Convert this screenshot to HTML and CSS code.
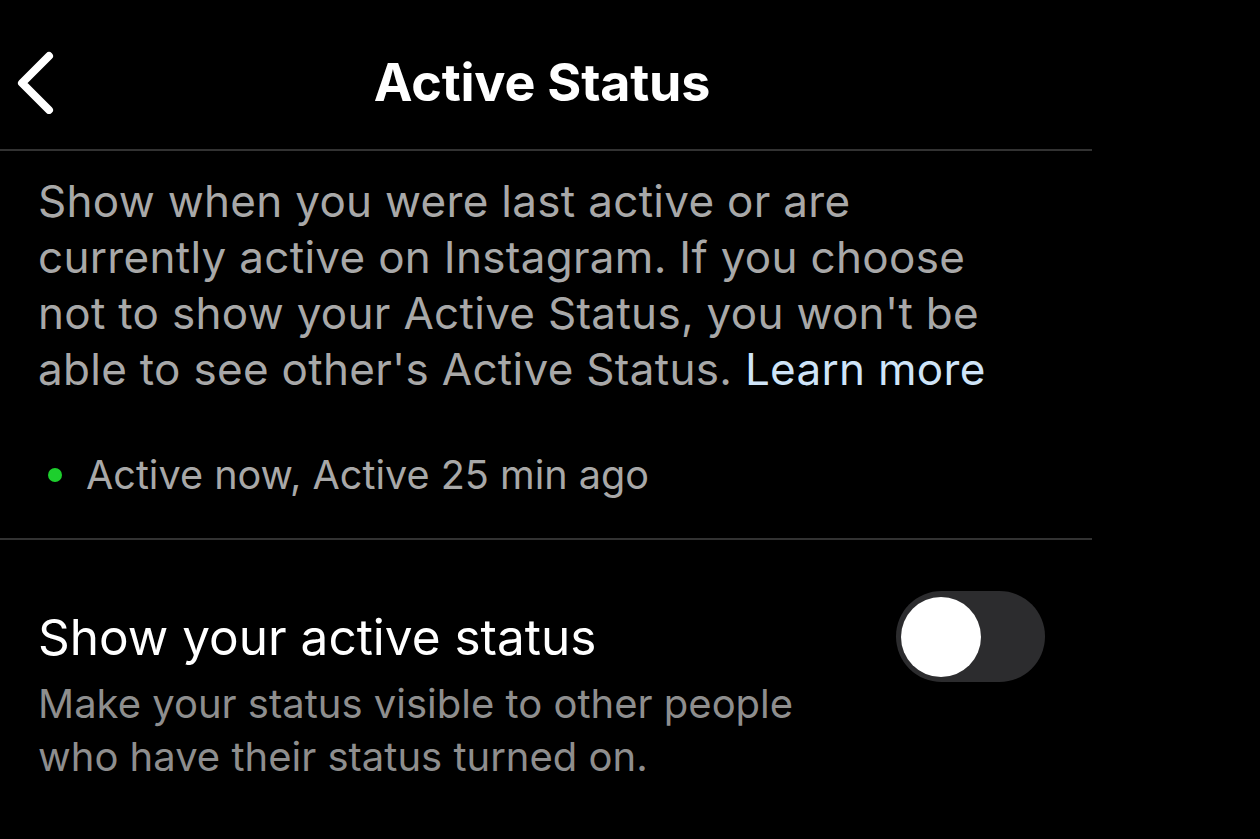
FILE: index.html
```html
<!DOCTYPE html>
<html>
<head>
<meta charset="utf-8">
<link rel="stylesheet" href="styles.css">
</head>
<body>
<div class="screen">
  <header class="nav">
    <svg class="back" width="40" height="64" viewBox="0 0 40 64">
      <path d="M34 6 L7 33 L34 60" fill="none" stroke="#fff" stroke-width="8" stroke-linecap="round" stroke-linejoin="round"/>
    </svg>
    <h1 class="title">Active Status</h1>
  </header>
  <section class="info">
    <p class="desc">Show when you were last active or are currently active on Instagram. If you choose not to show your Active Status, you won't be able to see other's Active Status. <span class="link">Learn more</span></p>
    <div class="example"><span class="dot"></span><span>Active now, Active 25 min ago</span></div>
  </section>
  <section class="setting">
    <div class="setting-text">
      <div class="setting-title">Show your active status</div>
      <div class="setting-sub">Make your status visible to other people who have their status turned on.</div>
    </div>
    <div class="toggle"><span class="knob"></span></div>
  </section>
</div>
</body>
</html>
```
FILE: styles.css
```css
html, body {
  margin: 0;
  padding: 0;
  background: #000;
}
body {
  width: 1260px;
  height: 839px;
  overflow: hidden;
  font-family: Inter, "Noto Sans", sans-serif;
}
.screen {
  width: 1092px;
}
.nav {
  position: relative;
  height: 149px;
  border-bottom: 2px solid #323232;
  display: flex;
  align-items: center;
  justify-content: center;
}
.back {
  position: absolute;
  left: 15px;
  top: 50px;
}
.title {
  margin: 0;
  color: #fff;
  font-size: 52px;
  line-height: 60px;
  font-weight: 700;
  position: relative;
  top: 8px;
  left: -4px;
  letter-spacing: -0.2px;
}
.info {
  padding: 22px 0 39px 38px;
  border-bottom: 2px solid #323232;
}
.desc {
  margin: 0;
  color: #a8a8a8;
  font-size: 44px;
  line-height: 56px;
  letter-spacing: 0.3px;
  width: 980px;
}
.link {
  color: #cfe4f8;
}
.example {
  display: flex;
  align-items: center;
  margin-top: 54px;
  color: #a8a8a8;
  font-size: 39.6px;
  line-height: 48px;
}
.dot {
  width: 14px;
  height: 14px;
  border-radius: 50%;
  background: #1dcf2d;
  margin: 0 24px 0 10px;
}
.setting {
  display: flex;
  align-items: flex-start;
  justify-content: space-between;
  padding: 51px 47px 0 38px;
}
.setting-title {
  color: #fff;
  font-size: 49.5px;
  line-height: 60px;
  margin-top: 16px;
}
.setting-sub {
  color: #8e8e8e;
  font-size: 40px;
  line-height: 53px;
  width: 800px;
  margin-top: 10px;
}
.toggle {
  width: 149px;
  height: 91px;
  border-radius: 46px;
  background: #2c2c2e;
  display: flex;
  align-items: center;
  padding-left: 5px;
  box-sizing: border-box;
  flex-shrink: 0;
}
.knob {
  width: 80px;
  height: 80px;
  border-radius: 50%;
  background: #fff;
}
```
